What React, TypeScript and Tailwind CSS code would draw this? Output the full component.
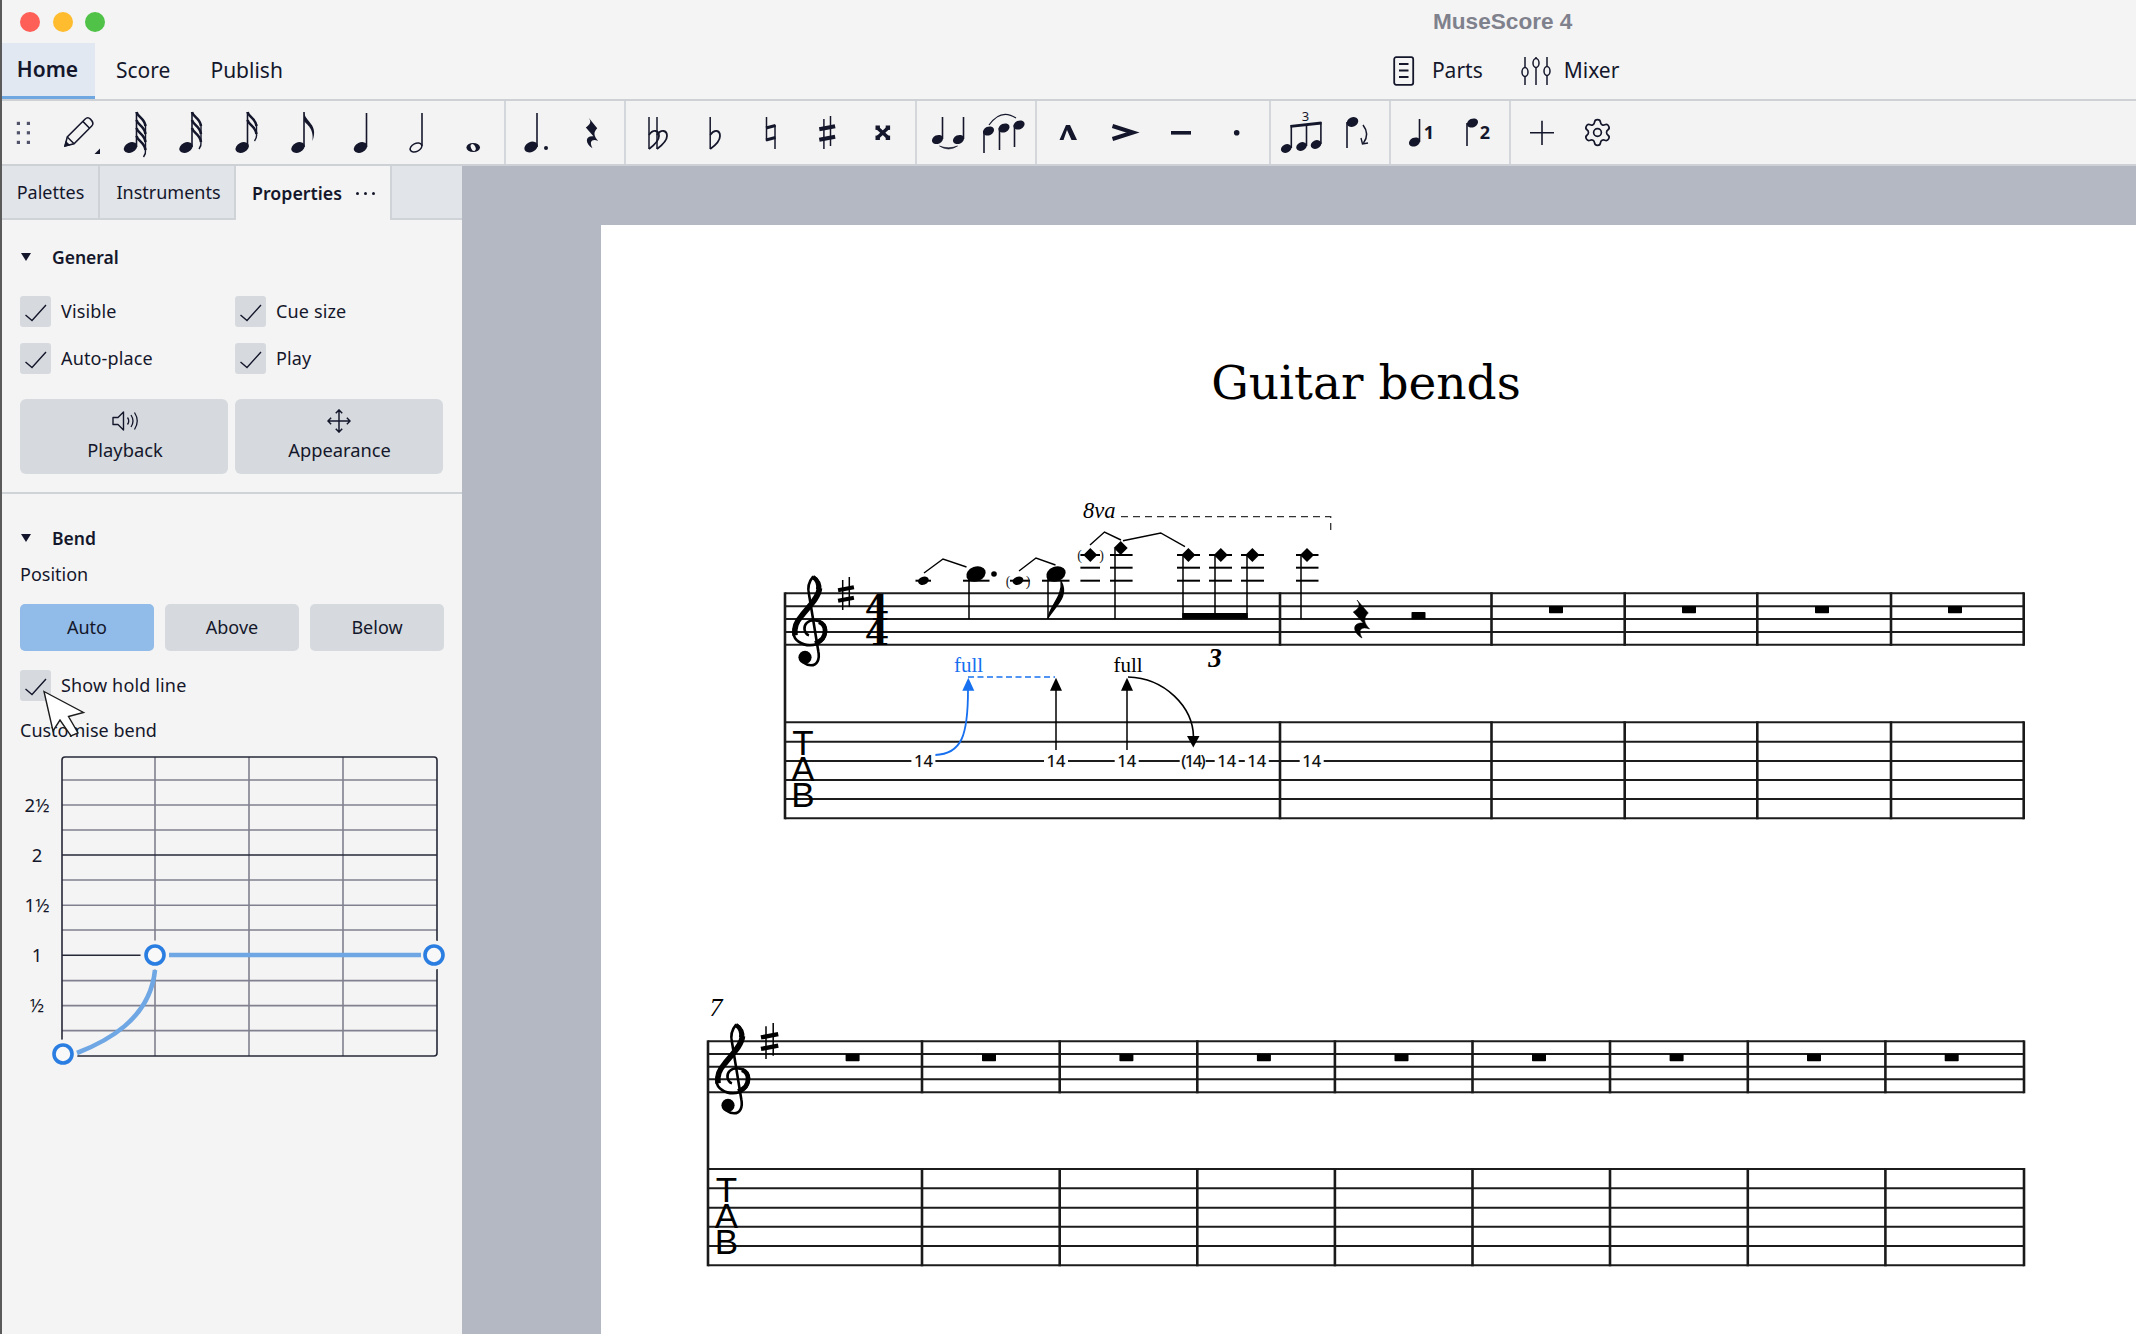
import React from "react";
import { Settings } from "lucide-react";

const INK = "#14172b";

function Head({ x, y, rx = 7, ry = 5 }: { x: number; y: number; rx?: number; ry?: number }) {
  return <ellipse cx={x} cy={y} rx={rx} ry={ry} transform={`rotate(-25 ${x} ${y})`} fill={INK} />;
}
function Stem({ x, y1, y2, w = 1.6 }: { x: number; y1: number; y2: number; w?: number }) {
  return <line x1={x} x2={x} y1={y1} y2={y2} stroke={INK} strokeWidth={w} />;
}
function Flags({ x, t, n }: { x: number; t: number; n: number }) {
  const items = [];
  for (let i = 0; i < n; i++) {
    const y = t + i * 8;
    items.push(
      <path key={i} d={`M${x} ${y} C${x + 1} ${y + 5} ${x + 8} ${y + 6} ${x + 9} ${y + 14}`} fill="none" stroke={INK} strokeWidth={2.6} />
    );
  }
  const last = t + (n - 1) * 8 + 14;
  return (
    <g>
      {items}
      <path d={`M${x + 9} ${t + 12} L${x + 9} ${last} C${x + 9.5} ${last + 3} ${x + 8.5} ${last + 5} ${x + 7} ${last + 7}`} fill="none" stroke={INK} strokeWidth={1.4} />
    </g>
  );
}
function SharpG({ cx, top, h, color = INK }: { cx: number; top: number; h: number; color?: string }) {
  const dx = h * 0.1;
  const w = h * 0.24;
  return (
    <g stroke={color} fill="none">
      <line x1={cx - dx} x2={cx - dx} y1={top + h * 0.09} y2={top + h} strokeWidth={1.5} />
      <line x1={cx + dx} x2={cx + dx} y1={top} y2={top + h * 0.91} strokeWidth={1.5} />
      <line x1={cx - w} x2={cx + w} y1={top + h * 0.4} y2={top + h * 0.31} strokeWidth={h * 0.12} />
      <line x1={cx - w} x2={cx + w} y1={top + h * 0.72} y2={top + h * 0.63} strokeWidth={h * 0.12} />
    </g>
  );
}
const REST = "M-3.5 -19 L5.5 -6 C1.5 -1 1.5 3 6.5 10 C0.5 7 -3.5 10 0.5 19 C-7.5 13 -7.5 3 1.5 4 L-6.5 -7 C-1.5 -11 -0.5 -14 -3.5 -19Z";

function Tool({ c, children }: { c: number; children: React.ReactNode }) {
  return (
    <svg width={56.5} height={63} viewBox={`${c - 28.25} 101 56.5 63`} className="shrink-0 block">
      {children}
    </svg>
  );
}

function Group({ w, first, children }: { w: number; first?: boolean; children: React.ReactNode }) {
  return (
    <div
      className={first ? "flex h-full shrink-0" : "flex h-full shrink-0 border-l-2 border-[#d3d6da] pl-[1px]"}
      style={{ width: w }}
    >
      {children}
    </div>
  );
}

function Toolbar() {
  const dots = [18.3, 28.3].flatMap((x) => [123.3, 132.7, 142.3].map((y) => [x, y]));
  return (
    <div className="flex h-[65px] border-b-2 border-[#cdd1d6] bg-[#f3f3f3]">
      <Group w={504} first>
        <svg width={50} height={63} viewBox="0 101 50 63" className="shrink-0 block">
          {dots.map(([x, y]) => (
            <rect key={`${x}-${y}`} x={x - 1.5} y={y - 1.5} width={3.2} height={3.2} fill="#50536a" />
          ))}
        </svg>
        <Tool c={78.25}>
          <g transform="translate(65 146) rotate(-45)" fill="none" stroke={INK} strokeWidth={1.5}>
            <path d="M0 0 L8 -4.8 L33 -4.8 Q37 -4.8 37 -1 Q37 4.8 33 4.8 L8 4.8 Z" />
            <path d="M8 -4.8 L8 4.8 M30 -4.8 L30 4.8" />
            <path d="M0 0 L3.5 -2 L3.5 2Z" fill={INK} />
          </g>
          <path d="M100 148.5 L100 154 L94.5 154Z" fill={INK} />
        </Tool>
        <Tool c={134.75}>
          <Head x={130} y={147.5} /><Stem x={136} y1={147} y2={112} /><Flags x={136} t={112} n={4} />
        </Tool>
        <Tool c={191.25}>
          <Head x={186} y={147.5} /><Stem x={192} y1={147} y2={112} /><Flags x={192} t={112} n={3} />
        </Tool>
        <Tool c={247.75}>
          <Head x={241.7} y={147.5} /><Stem x={247} y1={147} y2={112} /><Flags x={247} t={112} n={2} />
        </Tool>
        <Tool c={304.25}>
          <Head x={298} y={147.5} /><Stem x={304} y1={147} y2={112} />
          <path d="M304 112 C305 122 319 124 312.5 141 C314 128 307 125 304 121Z" fill={INK} />
        </Tool>
        <Tool c={360.75}>
          <Head x={360} y={147.5} /><Stem x={366} y1={147} y2={113} />
        </Tool>
        <Tool c={417.25}>
          <ellipse cx={416} cy={147.5} rx={6.2} ry={4} transform="rotate(-25 416 147.5)" fill="none" stroke={INK} strokeWidth={1.5} />
          <Stem x={422} y1={146} y2={113} />
        </Tool>
        <Tool c={473.75}>
          <ellipse cx={472.7} cy={147.5} rx={6.8} ry={4.6} fill={INK} />
          <ellipse cx={472.7} cy={147.5} rx={2.2} ry={3.6} fill="#f3f3f3" transform="rotate(-25 472.7 147.5)" />
        </Tool>
      </Group>
      <Group w={120}>
        <Tool c={535.25}>
          <Head x={531} y={147} /><Stem x={537} y1={147} y2={113} />
          <circle cx={546} cy={148} r={2} fill={INK} />
        </Tool>
        <Tool c={591.75}>
          <g transform="translate(591.5 133) scale(0.95 0.8)"><path d={REST} fill={INK} /></g>
        </Tool>
      </Group>
      <Group w={290.5}>
        <Tool c={655.25}>
          <g fill="none" stroke={INK}>
            <line x1={649} x2={649} y1={117} y2={149} strokeWidth={1.5} />
            <line x1={657} x2={657} y1={117} y2={149} strokeWidth={1.5} />
            <path d="M649 135 C653 129 659 130 659 136 C659 141 653 146 649 149" strokeWidth={1.8} />
            <path d="M657 135 C661 129 667 130 667 136 C667 141 661 146 657 149" strokeWidth={1.8} />
          </g>
        </Tool>
        <Tool c={711.75}>
          <g fill="none" stroke={INK}>
            <line x1={709.7} x2={709.7} y1={117} y2={149} strokeWidth={1.5} />
            <path d="M709.7 135 C714 129 719.5 130 719.5 136 C719.5 141 714 146 709.7 149" strokeWidth={1.8} />
          </g>
        </Tool>
        <Tool c={768.25}>
          <g fill="none" stroke={INK}>
            <line x1={766.5} x2={766.5} y1={117} y2={141} strokeWidth={1.5} />
            <line x1={775} x2={775} y1={125} y2={149} strokeWidth={1.5} />
            <line x1={766} x2={775.5} y1={128} y2={125.5} strokeWidth={3} />
            <line x1={766} x2={775.5} y1={140} y2={137.5} strokeWidth={3} />
          </g>
        </Tool>
        <Tool c={824.75}>
          <SharpG cx={826.7} top={116} h={33} />
        </Tool>
        <Tool c={881.25}>
          <g stroke={INK} strokeWidth={3.6}>
            <line x1={877} y1={127.5} x2={888.5} y2={138} />
            <line x1={888.5} y1={127.5} x2={877} y2={138} />
          </g>
          <g fill={INK}>
            <rect x={875.5} y={125.5} width={4.4} height={4.4} />
            <rect x={885.7} y={125.5} width={4.4} height={4.4} />
            <rect x={875.5} y={135.6} width={4.4} height={4.4} />
            <rect x={885.7} y={135.6} width={4.4} height={4.4} />
          </g>
        </Tool>
      </Group>
      <Group w={120}>
        <Tool c={945.75}>
          <Head x={937} y={139.5} rx={5.8} ry={4.3} /><Stem x={942} y1={139} y2={117} />
          <Head x={958} y={139.5} rx={5.8} ry={4.3} /><Stem x={963} y1={139} y2={117} />
          <path d="M939 146 Q948 152 957 146 Q948 149.5 939 146Z" fill={INK} stroke={INK} strokeWidth={0.6} />
        </Tool>
        <Tool c={1002.25}>
          <Head x={988.5} y={131} rx={5.8} ry={4.3} /><Stem x={984} y1={131} y2={153} />
          <Head x={1004} y={128} rx={5.8} ry={4.3} /><Stem x={999.5} y1={128} y2={150} />
          <Head x={1019} y={125} rx={5.8} ry={4.3} /><Stem x={1014.5} y1={125} y2={147} />
          <path d="M989 125 Q1001 108 1016 118" fill="none" stroke={INK} strokeWidth={1.2} />
        </Tool>
      </Group>
      <Group w={234}>
        <Tool c={1065.75}>
          <path d="M1059 140 L1065.5 125 L1069.5 125 L1076.5 140 L1071 140 L1066.5 130 L1063 140Z" fill={INK} />
        </Tool>
        <Tool c={1122.25}>
          <path d="M1112.5 126 L1133 132.5 L1112.5 139" fill="none" stroke={INK} strokeWidth={4} />
        </Tool>
        <Tool c={1178.75}>
          <rect x={1170.5} y={131} width={20} height={3.6} fill={INK} />
        </Tool>
        <Tool c={1235.25}>
          <circle cx={1236.7} cy={132.7} r={2.8} fill={INK} />
        </Tool>
      </Group>
      <Group w={120}>
        <Tool c={1299.75}>
          <Head x={1285.7} y={148.5} rx={5.5} ry={4.2} /><Stem x={1290.8} y1={148} y2={125} />
          <Head x={1301} y={146.5} rx={5.5} ry={4.2} /><Stem x={1306} y1={146} y2={124} />
          <Head x={1315.5} y={144.5} rx={5.5} ry={4.2} /><Stem x={1320.4} y1={144} y2={122} />
          <line x1={1290} y1={126.3} x2={1321} y2={123} stroke={INK} strokeWidth={2.8} />
          <text x={1305} y={121} textAnchor="middle" fill={INK} className="font-['Noto_Sans',sans-serif] text-[13px]">3</text>
        </Tool>
        <Tool c={1356.25}>
          <Head x={1352.5} y={122} rx={6} ry={4.6} /><Stem x={1347} y1={122} y2={148} />
          <path d="M1363 125 Q1370 134 1363.5 143" fill="none" stroke={INK} strokeWidth={1.5} />
          <path d="M1361 138 L1362.5 144 L1368 143" fill="none" stroke={INK} strokeWidth={1.4} />
        </Tool>
      </Group>
      <Group w={120.5}>
        <Tool c={1419.75}>
          <Head x={1414} y={142} rx={5.8} ry={4.3} /><Stem x={1419} y1={142} y2={119} />
          <text x={1428.5} y={139} textAnchor="middle" fill={INK} className="font-['Noto_Sans',sans-serif] text-[18px] font-bold">1</text>
        </Tool>
        <Tool c={1476.25}>
          <Head x={1472.5} y={123} rx={5.8} ry={4.3} /><Stem x={1467} y1={123} y2={146} />
          <text x={1485} y={139} textAnchor="middle" fill={INK} className="font-['Noto_Sans',sans-serif] text-[18px] font-bold">2</text>
        </Tool>
      </Group>
      <Group w={150}>
        <Tool c={1540.25}>
          <path d="M1530 132.7 L1554 132.7 M1542 120.7 L1542 145" stroke={INK} strokeWidth={1.6} fill="none" />
        </Tool>
        <div className="flex h-full w-[56.5px] items-center justify-center pl-[1px]">
          <Settings size={31} strokeWidth={1.3} color={INK} />
        </div>
      </Group>
    </div>
  );
}

function Check() {
  return (
    <svg viewBox="0 0 31 31" className="block h-[31px] w-[31px] shrink-0 rounded-[3px] bg-[#d6dade]">
      <path d="M5.5 19 L12 24.5 L26 9" fill="none" stroke={INK} strokeWidth={1.4} />
    </svg>
  );
}

function CheckRow({ label }: { label: string }) {
  return (
    <div className="flex items-center gap-[10px]">
      <Check />
      <span className="pb-[2px] text-[18px] leading-[24px] tracking-[0.15px]">{label}</span>
    </div>
  );
}

function Caret() {
  return (
    <svg viewBox="0 0 10 10" className="block h-[10px] w-[10px]">
      <path d="M0 1 L10 1 L5 9Z" fill={INK} />
    </svg>
  );
}

function SectionHead({ title }: { title: string }) {
  return (
    <div className="flex h-[24px] items-center pl-[21px]">
      <Caret />
      <span className="ml-[21px] text-[17.5px] font-semibold">{title}</span>
    </div>
  );
}

function BendGraph() {
  const hy = [780, 805, 830, 880, 905.3, 930, 980.6, 1005.6, 1030.6];
  const labels: [string, number][] = [
    ["2½", 806], ["2", 856], ["1½", 906.3], ["1", 956], ["½", 1006],
  ];
  return (
    <svg width={462} height={340} viewBox="0 745 462 340" className="mt-[3px] block">
      {hy.map((y) => (
        <line key={y} x1={62} x2={437} y1={y} y2={y} stroke="#80808f" strokeWidth={1.6} />
      ))}
      {[155, 249, 343].map((x) => (
        <line key={x} x1={x} x2={x} y1={757} y2={1056} stroke="#80808f" strokeWidth={1.6} />
      ))}
      <line x1={62} x2={437} y1={855} y2={855} stroke="#262838" strokeWidth={1.5} />
      <line x1={62} x2={155} y1={955.3} y2={955.3} stroke="#262838" strokeWidth={1.5} />
      <rect x={62} y={757} width={375} height={299} rx={3} fill="none" stroke="#262838" strokeWidth={1.6} />
      <circle cx={155} cy={955} r={14.5} fill="#f4f4f4" />
      <circle cx={434} cy={955} r={14.5} fill="#f4f4f4" />
      <circle cx={63} cy={1054} r={14.5} fill="#f4f4f4" />
      <line x1={169} x2={421} y1={955} y2={955} stroke="#6ea7e4" strokeWidth={4.6} />
      <path d="M77 1053 C105 1042 150 1020 155 970" fill="none" stroke="#6ea7e4" strokeWidth={4.6} />
      {[[63, 1054], [155, 955], [434, 955]].map(([x, y]) => (
        <circle key={x} cx={x} cy={y} r={9} fill="#f8f8f8" stroke="#2a7de1" strokeWidth={3.6} />
      ))}
      {labels.map(([t, y]) => (
        <text key={t} x={37} y={y + 6} textAnchor="middle" fill={INK} className="text-[18.5px]">{t}</text>
      ))}
    </svg>
  );
}

function Panel() {
  return (
    <div className="flex h-full w-[462px] shrink-0 flex-col bg-[#f4f4f4]">
      <div className="flex h-[54px] shrink-0 bg-[#e1e4e9] text-[18px]">
        <div className="flex w-[100px] items-center justify-center border-b-2 border-r-2 border-[#cfd3d8] pl-[3px]">Palettes</div>
        <div className="flex w-[136px] items-center justify-center border-b-2 border-r-2 border-[#cfd3d8] pl-[3px]">Instruments</div>
        <div className="flex w-[156px] items-center gap-[14px] border-r-2 border-[#cfd3d8] bg-[#f4f4f4] pl-[16px]">
          <span className="text-[17.8px] font-semibold">Properties</span>
          <span className="flex gap-[5px]">
            <span className="h-[3px] w-[3px] rounded-full bg-[#14172b]" />
            <span className="h-[3px] w-[3px] rounded-full bg-[#14172b]" />
            <span className="h-[3px] w-[3px] rounded-full bg-[#14172b]" />
          </span>
        </div>
        <div className="flex-1 border-b-2 border-[#cfd3d8]" />
      </div>
      <div className="mt-[25px]"><SectionHead title="General" /></div>
      <div className="ml-[20px] mt-[27px] grid grid-cols-[215px_1fr] gap-y-[16px]">
        <CheckRow label="Visible" />
        <CheckRow label="Cue size" />
        <CheckRow label="Auto-place" />
        <CheckRow label="Play" />
      </div>
      <div className="ml-[20px] mt-[25px] grid w-[423px] grid-cols-2 gap-[7px]">
        <button className="flex h-[75px] flex-col items-center rounded-[6px] bg-[#d6dade] pl-[2px] pt-[10px] text-[18.3px]">
          <svg viewBox="0 0 28 24" className="block h-[24px] w-[28px]">
            <path d="M2 8.5 L7 8.5 L12.5 3 L12.5 21 L7 15.5 L2 15.5Z" fill="none" stroke={INK} strokeWidth={1.4} strokeLinejoin="round" />
            <path d="M16.5 8.5 Q19 12 16.5 15.5 M20 6 Q24 12 20 18 M23.5 3.5 Q29 12 23.5 20.5" fill="none" stroke={INK} strokeWidth={1.3} />
          </svg>
          <span className="mt-[5px] leading-[24px]">Playback</span>
        </button>
        <button className="flex h-[75px] flex-col items-center rounded-[6px] bg-[#d6dade] pl-[1px] pt-[10px] text-[18.3px]">
          <svg viewBox="0 0 26 26" className="-ml-[2px] block h-[24px] w-[24px]">
            <path d="M13 1 L13 25 M1 13 L25 13 M9.5 4.5 L13 1 L16.5 4.5 M9.5 21.5 L13 25 L16.5 21.5 M4.5 9.5 L1 13 L4.5 16.5 M21.5 9.5 L25 13 L21.5 16.5" fill="none" stroke={INK} strokeWidth={1.6} />
          </svg>
          <span className="mt-[5px] leading-[24px]">Appearance</span>
        </button>
      </div>
      <div className="mt-[18px] h-[2px] bg-[#cfd3d8]" />
      <div className="mt-[32px]"><SectionHead title="Bend" /></div>
      <div className="ml-[20px] mt-[12px] text-[18px] leading-[24px]">Position</div>
      <div className="ml-[20px] mt-[18px] flex gap-[11px] text-[18px]">
        <button className="h-[47px] w-[134px] rounded-[5px] bg-[#91bbe8]">Auto</button>
        <button className="h-[47px] w-[134px] rounded-[5px] bg-[#d6dade]">Above</button>
        <button className="h-[47px] w-[134px] rounded-[5px] bg-[#d6dade]">Below</button>
      </div>
      <div className="ml-[20px] mt-[19px]"><CheckRow label="Show hold line" /></div>
      <div className="ml-[20px] mt-[17px] text-[18px] leading-[24px]">Customise bend</div>
      <BendGraph />
    </div>
  );
}

function Clef({ x, y }: { x: number; y: number }) {
  return (
    <g transform={`translate(${x} ${y})`} fill="none" stroke="#000">
      <path d="M3.3 -17 C-1 -12 -2.5 -5 -1 1 L8.3 58 C10 66 7 72 1 72 C-4 72 -8 69 -8 65" strokeWidth={2.6} />
      <path d="M3.3 -17 C9 -14 11 -8 10 -3 C9 5 -2 14 -8 22 C-14 29 -17 34 -16.5 40 C-16 47 -8 52 0 52 C9 52 16 46 16 38 C16 31 10 27 4 27 C-2 27 -6 31 -5.5 36 C-5 39 -3 41.5 -1 42" strokeWidth={2.6} />
      <path d="M9.5 -5 C8.5 5 -2 14 -8 22 C-14 29 -16 34 -15 42" strokeWidth={5.6} />
      <path d="M5 50 C12 47.5 15 44 15 37 C15 33 13 30 9 28.5" strokeWidth={4.6} />
      <path d="M3.3 -16 C7 -14 9 -9 8 -4" strokeWidth={4.2} />
      <circle cx={-5} cy={64} r={6.6} fill="#000" stroke="none" />
    </g>
  );
}

function Lines({ x1, x2, ys }: { x1: number; x2: number; ys: number[] }) {
  return (
    <g stroke="#1c1c1c" strokeWidth={2}>
      {ys.map((y) => <line key={y} x1={x1} x2={x2} y1={y} y2={y} />)}
    </g>
  );
}

function Bars({ xs, y1, y2 }: { xs: number[]; y1: number; y2: number }) {
  return (
    <g stroke="#1a1a1a" strokeWidth={2.6}>
      {xs.map((x) => <line key={x} x1={x} x2={x} y1={y1} y2={y2} />)}
    </g>
  );
}

function RestBlock({ x, y }: { x: number; y: number }) {
  return <rect x={x - 7} y={y} width={14} height={7.3} rx={0.8} fill="#000" />;
}

function Ledgers({ x1, x2, ys }: { x1: number; x2: number; ys: number[] }) {
  return (
    <g stroke="#000" strokeWidth={2}>
      {ys.map((y) => <line key={y} x1={x1} x2={x2} y1={y} y2={y} />)}
    </g>
  );
}

function Diamond({ x, y }: { x: number; y: number }) {
  return <path d={`M${x} ${y - 7} L${x + 7} ${y} L${x} ${y + 7} L${x - 7} ${y}Z`} fill="#000" />;
}

function Tab14({ x, t = "14", w = 22, tight }: { x: number; t?: string; w?: number; tight?: boolean }) {
  return (
    <g>
      <rect x={x - w / 2 - 1} y={752} width={w + 2} height={18} fill="#fff" />
      <text
        x={x}
        y={767}
        textAnchor="middle"
        fill="#111"
        className={tight ? "font-['Noto_Sans',sans-serif] text-[16.5px] font-medium tracking-[-1.6px]" : "font-['Noto_Sans',sans-serif] text-[16.5px] font-medium"}
      >
        {t}
      </text>
    </g>
  );
}

function TabLetters({ x, top }: { x: number; top: number }) {
  return (
    <g fill="#000" textAnchor="middle" className="font-['Liberation_Sans',sans-serif] text-[35px]">
      <text x={x} y={top + 33}>T</text>
      <text x={x} y={top + 58.5}>A</text>
      <text x={x} y={top + 84.5}>B</text>
    </g>
  );
}

const SERIF = "font-['Liberation_Serif',serif]";

function Score() {
  const s1 = [593.3, 606.2, 619, 632, 644.8];
  const t1 = [722.3, 741.7, 761, 780, 799, 818.3];
  const b1 = [1280, 1491.5, 1624.7, 1757.3, 1891, 2023.7];
  const s2 = [1041.3, 1054, 1066.7, 1079.3, 1092.3];
  const t2 = [1169, 1188.3, 1207.7, 1226.7, 1246, 1265.3];
  const b2 = [922, 1059.7, 1197.3, 1334.9, 1472.5, 1610, 1747.8, 1885.4, 2024];
  const r2 = [852.6, 989, 1126.4, 1263.9, 1401.5, 1539, 1676.6, 1814, 1951.7];
  const L3 = [555, 567.7, 580.7];
  return (
    <svg width={1535} height={854} viewBox="601 480 1535 854" className="block">
      {/* system 1 */}
      <Lines x1={785} x2={2024} ys={s1} />
      <Lines x1={785} x2={2024} ys={t1} />
      <line x1={785} x2={785} y1={592.3} y2={819.3} stroke="#1a1a1a" strokeWidth={2.6} />
      <Bars xs={b1} y1={592.3} y2={645.8} />
      <Bars xs={b1} y1={721.3} y2={819.3} />
      <Clef x={810} y={593.3} />
      <SharpG cx={846} top={577} h={33} color="#000" />
      <g fill="#000" textAnchor="middle" className="font-['DejaVu_Serif',serif] text-[35px] font-bold">
        <text x={877} y={619.5}>4</text>
        <text x={877} y={645.3}>4</text>
      </g>
      <TabLetters x={803} top={722.3} />

      {/* notes */}
      <Ledgers x1={915.5} x2={931} ys={[580.7]} />
      <ellipse cx={923.4} cy={580.7} rx={5.5} ry={4} fill="#000" transform="rotate(-20 923.4 580.7)" />
      <path d="M924 573 L943 559 L966.5 567" fill="none" stroke="#000" strokeWidth={1.4} />
      <Ledgers x1={963} x2={989.5} ys={[580.7]} />
      <ellipse cx={976} cy={574} rx={10} ry={7.4} fill="#000" transform="rotate(-20 976 574)" />
      <line x1={969} x2={969} y1={576} y2={619} stroke="#000" strokeWidth={1.5} />
      <circle cx={994} cy={574} r={2.8} fill="#000" />
      <Ledgers x1={1010} x2={1030} ys={[580.7]} />
      <ellipse cx={1018} cy={580.7} rx={5.5} ry={4} fill="#000" transform="rotate(-20 1018 580.7)" />
      <g fill="#222" textAnchor="middle" className={`${SERIF} text-[14px]`}>
        <text x={1008} y={585.5}>(</text>
        <text x={1028} y={585.5}>)</text>
        <text x={1079.5} y={560}>(</text>
        <text x={1101.5} y={560}>)</text>
      </g>
      <path d="M1019 571 L1036 558 L1055.5 565" fill="none" stroke="#000" strokeWidth={1.4} />
      <Ledgers x1={1042} x2={1069.5} ys={[580.7]} />
      <ellipse cx={1056} cy={574} rx={10} ry={7.4} fill="#000" transform="rotate(-20 1056 574)" />
      <line x1={1048} x2={1048} y1={576} y2={619} stroke="#000" strokeWidth={1.5} />
      <path d="M1048 618 C1050 605 1063 597 1061 581 C1069 596 1057 604 1048 618Z" fill="#000" stroke="#000" strokeWidth={1.2} />

      <Ledgers x1={1080.4} x2={1100} ys={L3} />
      <Diamond x={1090.3} y={555} />
      <Ledgers x1={1110} x2={1132.6} ys={L3} />
      <Diamond x={1120.7} y={548} />
      <line x1={1115} x2={1115} y1={549} y2={619} stroke="#000" strokeWidth={1.5} />
      <path d="M1090 545 L1104.5 532 L1121 540" fill="none" stroke="#000" strokeWidth={1.4} />
      <path d="M1123 540.7 L1160.7 533 L1185 546.7" fill="none" stroke="#000" strokeWidth={1.4} />

      {[[1188.4, 1177, 1200, 1183], [1220.8, 1209, 1232, 1215], [1252.4, 1241, 1264, 1247]].map(([x, a, b, st]) => (
        <g key={x}>
          <Ledgers x1={a} x2={b} ys={L3} />
          <Diamond x={x} y={555} />
          <line x1={st} x2={st} y1={556} y2={618} stroke="#000" strokeWidth={1.5} />
        </g>
      ))}
      <rect x={1182.3} y={613} width={65.4} height={5.8} fill="#000" />
      <text x={1215} y={667} textAnchor="middle" fill="#000" className={`${SERIF} text-[27px] font-bold italic`}>3</text>

      <Ledgers x1={1296} x2={1318.5} ys={L3} />
      <Diamond x={1307} y={555} />
      <line x1={1301} x2={1301} y1={556} y2={619} stroke="#000" strokeWidth={1.5} />

      <text x={1083} y={517.5} fill="#000" className={`${SERIF} text-[22.5px] italic`}>8va</text>
      <path d="M1121 516.7 L1330.7 516.7 L1330.7 530" fill="none" stroke="#333" strokeWidth={1.3} strokeDasharray="7 5" />

      <g transform="translate(1361.4 619) scale(1.25 1)"><path d={REST} fill="#000" stroke="#000" strokeWidth={0.5} /></g>
      <rect x={1411.5} y={612} width={14} height={7.3} rx={0.8} fill="#000" />
      {[1556, 1689, 1822, 1955].map((x) => <RestBlock key={x} x={x} y={606} />)}

      {/* bends */}
      <path d="M935 755 C962 754 968 735 968 690" fill="none" stroke="#1670f0" strokeWidth={1.8} />
      <path d="M968.3 677.7 L974.3 690.7 L962.3 690.7Z" fill="#1670f0" />
      <line x1={968} x2={1055} y1={677} y2={677} stroke="#1670f0" strokeWidth={1.6} strokeDasharray="6 3.5" />
      <text x={968.5} y={672} textAnchor="middle" fill="#1670f0" className={`${SERIF} text-[21px]`}>full</text>
      <path d="M1056 677.7 L1062 690.7 L1050 690.7Z" fill="#000" />
      <line x1={1056} x2={1056} y1={690} y2={750} stroke="#000" strokeWidth={1.5} />
      <path d="M1127 677.7 L1133 690.7 L1121 690.7Z" fill="#000" />
      <line x1={1127} x2={1127} y1={690} y2={750} stroke="#000" strokeWidth={1.5} />
      <text x={1128} y={672} textAnchor="middle" fill="#000" className={`${SERIF} text-[21px]`}>full</text>
      <path d="M1128 677 C1165 678 1193 707 1193.5 737" fill="none" stroke="#000" strokeWidth={1.6} />
      <path d="M1187 736 L1199.5 736 L1193.3 747.5Z" fill="#000" />
      <Tab14 x={923.4} />
      <Tab14 x={1056} />
      <Tab14 x={1126.7} />
      <Tab14 x={1192.7} t="(14)" w={24} tight />
      <Tab14 x={1226.7} />
      <Tab14 x={1256.8} />
      <Tab14 x={1311.7} />

      {/* system 2 */}
      <Lines x1={708} x2={2024} ys={s2} />
      <Lines x1={708} x2={2024} ys={t2} />
      <line x1={708} x2={708} y1={1040.3} y2={1266.3} stroke="#1a1a1a" strokeWidth={2.6} />
      <Bars xs={b2} y1={1040.3} y2={1093.3} />
      <Bars xs={b2} y1={1168} y2={1266.3} />
      <Clef x={733} y={1041.3} />
      <SharpG cx={769.6} top={1023} h={36} color="#000" />
      <text x={716} y={1016} textAnchor="middle" fill="#000" className={`${SERIF} text-[26px] italic`}>7</text>
      <TabLetters x={726.4} top={1169} />
      {r2.map((x) => <RestBlock key={x} x={x} y={1054} />)}
    </svg>
  );
}

export default function App() {
  return (
    <div className="relative flex h-[1334px] w-[2136px] flex-col overflow-hidden bg-[#f4f4f4] font-['Noto_Sans',sans-serif] text-[#14172b]">
      <div className="flex h-[43px] shrink-0 items-center pl-[20px]">
        <div className="flex gap-[12.5px]">
          <span className="h-[20px] w-[20px] rounded-full bg-[#fe5f57]" />
          <span className="h-[20px] w-[20px] rounded-full bg-[#febc2e]" />
          <span className="h-[20px] w-[20px] rounded-full bg-[#4fc247]" />
        </div>
        <span className="ml-[1328px] font-['Liberation_Sans',sans-serif] text-[22.6px] font-bold text-[#7f818d]">MuseScore 4</span>
      </div>
      <div className="flex h-[58px] shrink-0 items-stretch border-b-2 border-[#cdd1d6] text-[21px]">
        <div className="flex w-[95px] items-center justify-center border-b-[3px] border-[#6fa8e0] bg-[#e1e8f2] font-semibold">Home</div>
        <div className="ml-[21px] flex items-center">Score</div>
        <div className="ml-[40px] flex items-center">Publish</div>
        <div className="ml-[1110px] flex items-center">
          <svg viewBox="0 0 22 30" className="block h-[30px] w-[22px]">
            <rect x={1.2} y={1.2} width={19} height={27.6} rx={2} fill="none" stroke={INK} strokeWidth={1.8} />
            <path d="M6 8 H15.5 M6 14.5 H15.5 M6 21 H15.5" stroke={INK} strokeWidth={1.8} fill="none" />
          </svg>
          <span className="ml-[17px]">Parts</span>
        </div>
        <div className="ml-[38px] flex items-center">
          <svg viewBox="0 0 30 28" className="block h-[28px] w-[30px]">
            <g stroke={INK} strokeWidth={1.5} fill="none">
              <path d="M4 0 V28 M15 0 V28 M26 0 V28" />
              <ellipse cx={4} cy={15} rx={3} ry={4.5} fill="#f4f4f4" />
              <ellipse cx={15} cy={6} rx={3} ry={4.5} fill="#f4f4f4" />
              <ellipse cx={26} cy={14} rx={3} ry={4.5} fill="#f4f4f4" />
            </g>
          </svg>
          <span className="ml-[13px]">Mixer</span>
        </div>
      </div>
      <Toolbar />
      <div className="flex min-h-0 flex-1">
        <Panel />
        <div className="flex min-w-0 flex-1 flex-col bg-[#b4b8c2] pl-[139px] pt-[59px]">
          <div className="flex-1 overflow-hidden bg-white">
            <div className={`flex h-[255px] w-[1530px] items-start justify-center pt-[122px] font-['DejaVu_Serif',serif] text-[47px] leading-[72px] text-black`}>
              Guitar bends
            </div>
            <Score />
          </div>
        </div>
      </div>
      <div className="absolute inset-y-0 left-0 w-[1.5px] bg-[#5a5a5a]" />
      <svg viewBox="0 0 50 60" className="absolute left-[40px] top-[688px] h-[60px] w-[50px]">
        <path d="M4 3.5 L43.5 24.5 L28.5 28.5 L38 45 L31 48 L20 32 L13 43Z" fill="#fff" stroke="#1c1c1c" strokeWidth={1.4} strokeLinejoin="miter" />
      </svg>
    </div>
  );
}
